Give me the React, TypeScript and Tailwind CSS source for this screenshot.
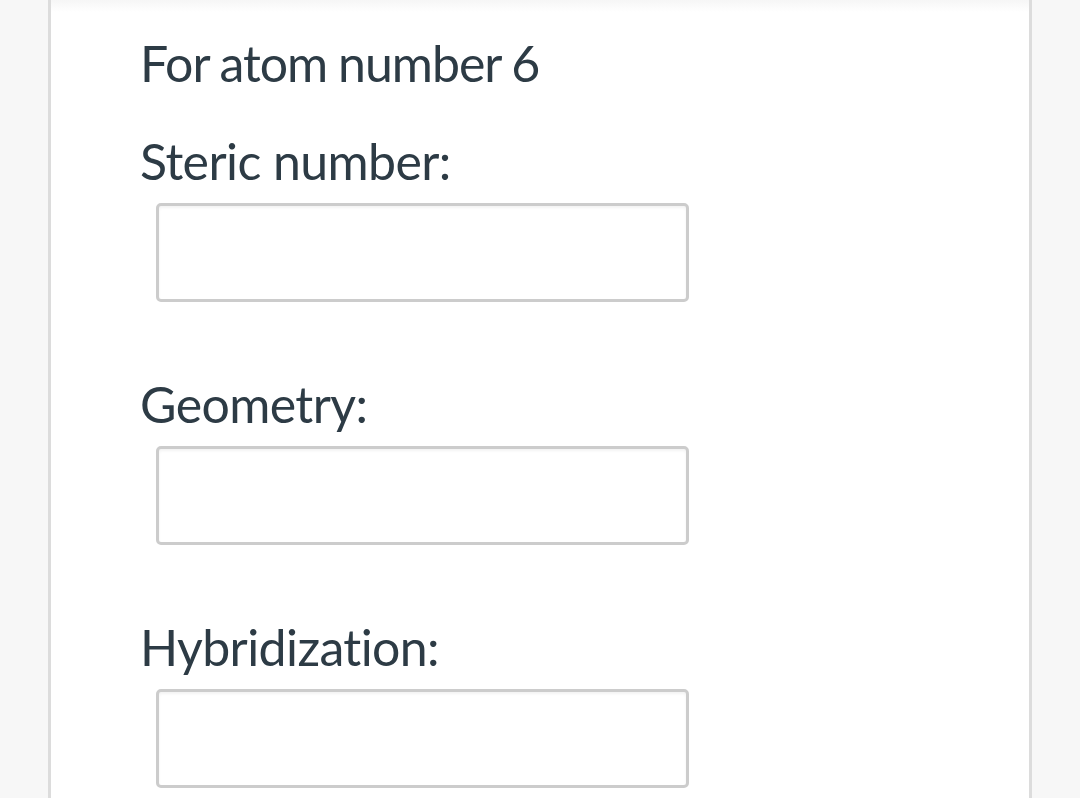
export default function App() {
  const fields = ['Steric number:', 'Geometry:', 'Hybridization:'];

  return (
    <div
      className="h-[798px] overflow-hidden bg-[#f7f7f7] flex text-[#2d3b45]"
      style={{ fontFamily: 'Lato, "Open Sans", sans-serif' }}
    >
      <div className="w-[48px] shrink-0" />
      <div className="w-[984px] shrink-0 bg-white border-x-[3px] border-[#dcdcdc] relative">
        {/* faint header shadow at the top edge */}
        <div className="absolute inset-x-0 top-0 h-[12px] bg-gradient-to-b from-[#f6f6f6] to-white" />
        <div className="relative pl-[89px] pt-[33px]">
          <p className="text-[50px] leading-[1.2] tracking-[-1px] [word-spacing:-1px]">For atom number 6</p>
          {fields.map((label, i) => (
            <div key={label} className={i === 0 ? 'mt-[38px]' : 'mt-[72px]'}>
              <label className="block text-[50px] leading-[1.2] tracking-[-0.6px]">{label}</label>
              <div className="mt-[12px] ml-[16px] w-[533px] h-[99px] border-[3px] border-[#cccccc] rounded-[5px] bg-white shadow-[inset_0_2px_3px_rgba(0,0,0,0.05)]" />
            </div>
          ))}
        </div>
      </div>
    </div>
  );
}
